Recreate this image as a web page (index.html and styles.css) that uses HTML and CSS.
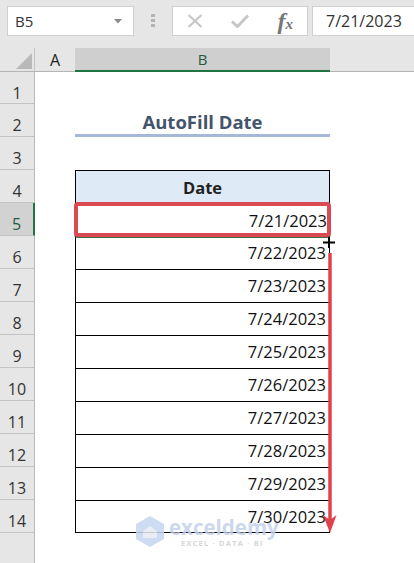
FILE: index.html
```html
<!DOCTYPE html>
<html lang="en">
<head>
<meta charset="UTF-8" />
<title>AutoFill Date</title>
<meta name="viewport" content="width=device-width, initial-scale=1" />
<link rel="stylesheet" href="styles.css">
</head>
<body>

<div class="toolbar">
  <div class="name-box">
    <span>B5</span>
    <svg class="caret" width="8" height="5" viewBox="0 0 8 5"><path d="M0 0H8L4 4.500Z" fill="#8a8a8a"/></svg>
  </div>
  <div class="grip"><i></i><i></i><i></i></div>
  <div class="fx-box">
    <svg width="16" height="14" viewBox="0 0 16 14"><path d="M1.500 1L14.500 13M14.500 1L1.500 13" stroke="#c6c6c6" stroke-width="2.200" fill="none"/></svg>
    <svg width="18" height="14" viewBox="0 0 18 14"><path d="M1 7.500L6.500 12.500L17 1.500" stroke="#c6c6c6" stroke-width="3" fill="none"/></svg>
    <span class="fx">f<sub>x</sub></span>
  </div>
  <div class="formula">7/21/2023</div>
</div>

<div class="sheet">
  <div class="col-heads">
    <div class="corner"><svg width="16" height="16" viewBox="0 0 16 16"><path d="M16 0V16H0Z" fill="#b9b9b9"/></svg></div>
    <div class="col-a">A</div>
    <div class="col-b">B</div>
  </div>

  <div class="row first"><div class="rh">1</div><div class="a"></div><div class="b"></div></div>
  <div class="row"><div class="rh">2</div><div class="a"></div><div class="b title">AutoFill Date</div></div>
  <div class="row"><div class="rh">3</div><div class="a"></div><div class="b"></div></div>
  <div class="row"><div class="rh">4</div><div class="a"></div><div class="b th">Date</div></div>
  <div class="row"><div class="rh sel">5</div><div class="a"></div><div class="b td active">7/21/2023</div></div>
  <div class="row"><div class="rh">6</div><div class="a"></div><div class="b td">7/22/2023</div></div>
  <div class="row"><div class="rh">7</div><div class="a"></div><div class="b td">7/23/2023</div></div>
  <div class="row"><div class="rh">8</div><div class="a"></div><div class="b td">7/24/2023</div></div>
  <div class="row"><div class="rh">9</div><div class="a"></div><div class="b td">7/25/2023</div></div>
  <div class="row"><div class="rh">10</div><div class="a"></div><div class="b td">7/26/2023</div></div>
  <div class="row"><div class="rh">11</div><div class="a"></div><div class="b td">7/27/2023</div></div>
  <div class="row"><div class="rh">12</div><div class="a"></div><div class="b td">7/28/2023</div></div>
  <div class="row"><div class="rh">13</div><div class="a"></div><div class="b td">7/29/2023</div></div>
  <div class="row"><div class="rh">14</div><div class="a"></div><div class="b td end">7/30/2023</div></div>
  <div class="row last"><div class="rh"></div><div class="a"></div><div class="b"></div></div>

  <!-- fill cursor and arrow sit over the cells -->
  <svg class="fill-mark" width="16" height="300" viewBox="0 0 16 300">
    <path d="M7 2V13M1 7.500H13" stroke="#000" stroke-width="2" fill="none"/>
    <path d="M8 18V285" stroke="#e0414b" stroke-width="3.500" fill="none"/>
    <path d="M1 280L8 298L14.500 280L8 285Z" fill="#e0414b"/>
  </svg>

  <div class="watermark">
    <svg width="28" height="31" viewBox="0 0 28 31"><path d="M14 0L28 8V23L14 31L0 23V8Z" fill="#c6d6f2"/><path d="M14 10L21 15V22H7V15Z" fill="#e6ebf5"/></svg>
    <div>
      <div class="wm-name">exceldemy</div>
      <div class="wm-tag">EXCEL · DATA · BI</div>
    </div>
  </div>
</div>

</body>
</html>
```

FILE: styles.css
```css
* { box-sizing: border-box; }
body { margin:0; height:563px; overflow:hidden; background:#fff; font-family:"Open Sans", sans-serif; color:#1a1a1a; }

.toolbar { height:48px; background:#e6e6e6; display:flex; align-items:flex-start; padding:6px 0 0 7px; }
.name-box, .fx-box, .formula { height:30px; background:#fff; border:1px solid #cfcfcf; display:flex; align-items:center; }
.name-box { width:127px; justify-content:space-between; padding:0 11px 0 7px; font-size:15px; color:#333; }
.grip { width:38px; height:30px; display:flex; flex-direction:column; justify-content:center; align-items:center; gap:2px; padding-bottom:2px; }
.grip i { width:4px; height:3px; background:#b4b4b4; }
.fx-box { width:136px; padding:0 14px 0 14px; justify-content:space-between; }
.fx { font-family:"Liberation Serif", serif; font-style:italic; font-weight:bold; font-size:24px; color:#777; line-height:1; }
.fx sub { font-size:15px; vertical-align:baseline; }
.formula { margin-left:4px; flex:1; padding-left:13px; font-size:16px; color:#333; border-right:none; }

.sheet { position:relative; }
.col-heads { height:24px; display:flex; background:#e6e6e6; border-bottom:1px solid #b5b5b5; }
.corner { width:35px; padding:4px 0 0 16px; border-right:1px solid #c4c4c4; }
.col-a { width:40px; text-align:center; font-size:16px; line-height:24px; color:#222; }
.col-b { width:255px; text-align:center; font-size:15px; line-height:23px; color:#1f5c40; background:#cfcfcf; border-bottom:2px solid #217346; height:24px; }

.row { display:flex; height:33px; }
.row.first { height:32px; }
.rh { width:35px; background:#e6e6e6; border-right:1px solid #b9b9b9; border-bottom:1px solid #c4c4c4; text-align:center; font-size:16px; line-height:33px; padding-top:5px; color:#333; }
.rh.sel { background:#d2d2d2; color:#1f5c40; border-right:2px solid #217346; }
.a { width:40px; }
.b { width:255px; }
.title { border-bottom:3px solid #a5b8da; text-align:center; font-weight:bold; font-size:18.500px; line-height:36px; color:#44546a; }
.th { border:1px solid #000; border-bottom:none; background:#deeaf6; text-align:center; font-weight:bold; font-size:16.500px; line-height:33px; color:#222; }
.td { border:1px solid #000; border-bottom:none; text-align:right; font-size:16.500px; line-height:32px; padding-right:3px; color:#111; }
.td.end { border-bottom:1px solid #000; }
.td.active { width:257px; height:35px; margin:-1px -1px 0; border:4px solid #db4a52; border-radius:4px; line-height:29px; padding-right:0; box-shadow:0 1px 0 #3d6b50; position:relative; }
.last .rh { border-bottom:none; padding:0; }

.fill-mark { position:absolute; left:322px; top:187px; }

.watermark { position:absolute; left:136px; top:468px; display:flex; gap:5px; opacity:.85; }
.wm-name { font-family:"Open Sans", sans-serif; font-weight:bold; font-size:20.500px; line-height:22px; color:#c4d2ec; }
.wm-tag { font-size:7.500px; letter-spacing:1.200px; color:#d0d0d0; font-weight:bold; margin-left:12px; }
```
